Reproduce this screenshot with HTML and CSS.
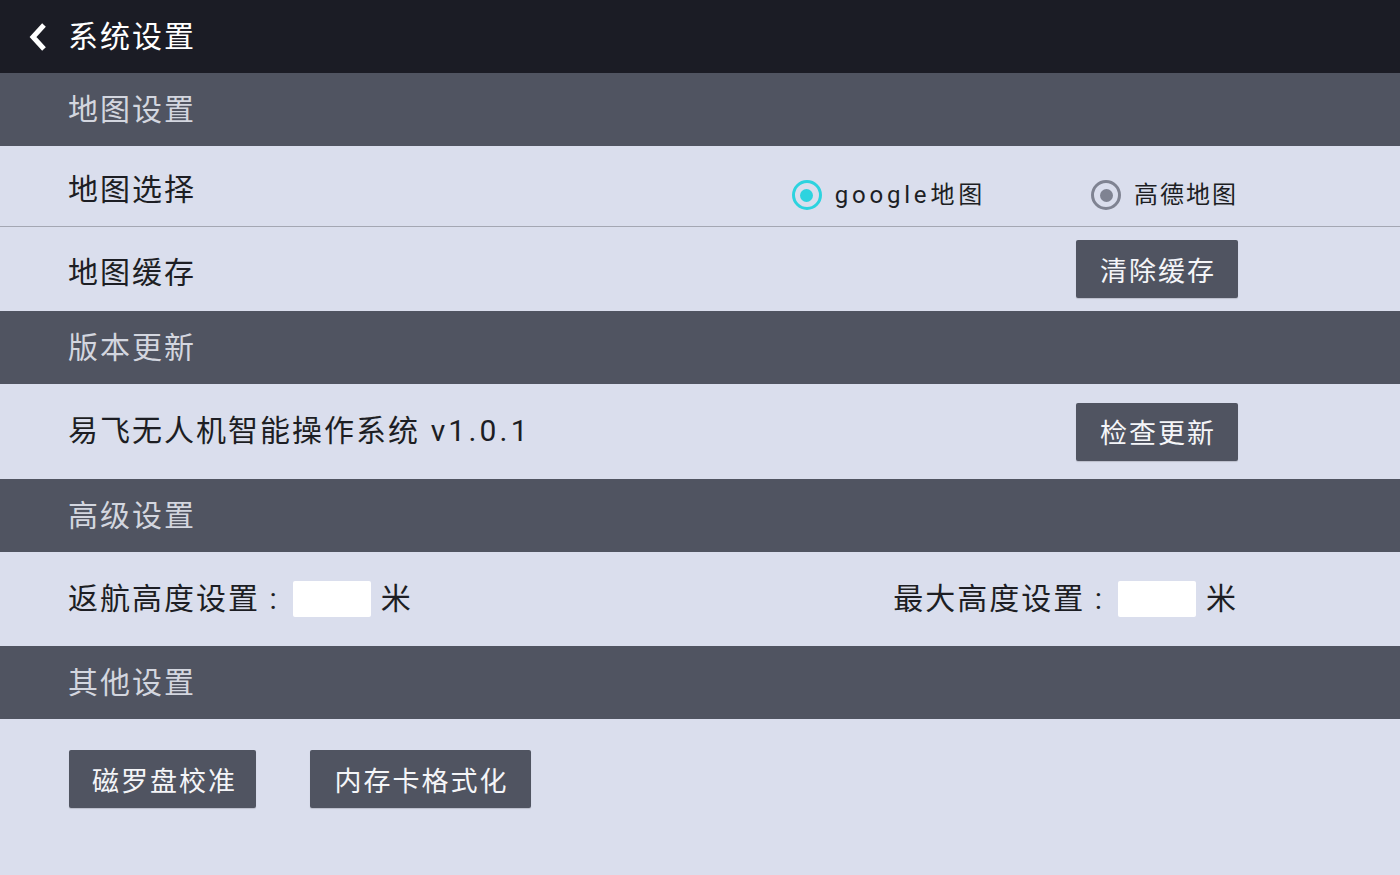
FILE: index.html
```html
<!DOCTYPE html>
<html lang="zh-CN">
<head>
<meta charset="utf-8">
<title>系统设置</title>
<link rel="stylesheet" href="styles.css">
</head>
<body>
<div class="page">
  <header class="topbar">
    <svg class="back" width="22" height="30" viewBox="0 0 22 30"><path d="M17 3 L6 15 L17 27" fill="none" stroke="#ffffff" stroke-width="5" stroke-linejoin="miter"/></svg>
    <span class="title">系统设置</span>
  </header>

  <div class="section">地图设置</div>
  <div class="row row-map bordered">
    <span class="label">地图选择</span>
    <div class="radios">
      <label class="radio on"><span class="dot"></span><span class="rtext">google地图</span></label>
      <label class="radio off"><span class="dot"></span><span class="rtext">高德地图</span></label>
    </div>
  </div>
  <div class="row row-cache">
    <span class="label">地图缓存</span>
    <button class="btn">清除缓存</button>
  </div>

  <div class="section">版本更新</div>
  <div class="row row-tall">
    <span class="label">易飞无人机智能操作系统<span class="ver"> v1.0.1</span></span>
    <button class="btn">检查更新</button>
  </div>

  <div class="section">高级设置</div>
  <div class="row row-tall2">
    <div class="field"><span class="label">返航高度设置 :</span><span class="input"></span><span class="label unit">米</span></div>
    <div class="field"><span class="label">最大高度设置 :</span><span class="input"></span><span class="label unit">米</span></div>
  </div>

  <div class="section">其他设置</div>
  <div class="rest">
    <button class="btn btn-a">磁罗盘校准</button>
    <button class="btn btn-b">内存卡格式化</button>
  </div>
</div>
</body>
</html>
```

FILE: styles.css
```css
* { box-sizing: border-box; }
html, body { margin: 0; padding: 0; }
body {
  background: #dadeed;
  font-family: "Roboto", "Noto Sans CJK SC", "Noto Sans", sans-serif;
}
.page {
  width: 1400px;
  height: 875px;
  display: flex;
  flex-direction: column;
  overflow: hidden;
}
.topbar {
  height: 73px;
  background: #1b1c25;
  display: flex;
  align-items: center;
  padding-left: 27px;
  gap: 19px;
  flex: none;
}
.back { margin-top: 1px; }
.title {
  color: #ffffff;
  font-size: 30px;
  letter-spacing: 2px;
  line-height: 1;
}
.section {
  height: 73px;
  background: #505461;
  color: #d3d6df;
  font-size: 30px;
  letter-spacing: 2px;
  display: flex;
  align-items: center;
  padding-left: 68px;
  padding-bottom: 6px;
  flex: none;
}
.row {
  display: flex;
  align-items: center;
  justify-content: space-between;
  padding: 0 162px 0 68px;
  background: #dadeed;
  flex: none;
}
.bordered { border-bottom: 1px solid #a4a7b3; }
.row-map { height: 81px; }
.row-map > .label { margin-top: 8px; }
.row-cache { height: 84px; }
.row-cache > .label { margin-top: 8px; }
.row-tall { height: 95px; }
.row-tall > .label { margin-bottom: 2px; }
.row-tall2 { height: 94px; }
.row-tall2 .field { margin-bottom: 1px; }
.label {
  color: #1d1e24;
  font-size: 30px;
  letter-spacing: 2px;
  line-height: 1;
}
.ver { letter-spacing: 3.2px; }
.radios {
  display: flex;
  align-items: center;
  gap: 105px;
  margin-top: 18px;
}
.radio {
  display: flex;
  align-items: center;
  gap: 13px;
}
.dot {
  width: 30px;
  height: 30px;
  border-radius: 50%;
  border: 3px solid #2dd3df;
  display: flex;
  align-items: center;
  justify-content: center;
}
.dot::after {
  content: "";
  width: 13px;
  height: 13px;
  border-radius: 50%;
  background: #2dd3df;
}
.radio.off .dot { border-color: #7f8392; }
.radio.off .dot::after { background: #7f8392; }
.rtext {
  color: #1d1e24;
  font-size: 24px;
  letter-spacing: 2px;
  line-height: 1;
}
.radio.on .rtext { letter-spacing: 3.8px; }
.btn {
  background: #505461;
  color: #f4f5f8;
  border: none;
  border-radius: 2px;
  height: 58px;
  padding: 0 22px 0 24px;
  font-family: "Noto Sans CJK SC", "Noto Sans", sans-serif;
  font-size: 27px;
  letter-spacing: 2px;
  box-shadow: 0 1px 1px rgba(0,0,0,0.15);
}
.btn-a { width: 187px; padding: 0 0 0 4px; }
.btn-b { width: 221px; padding: 0 0 0 2px; }
.field {
  display: flex;
  align-items: center;
}
.input {
  width: 78px;
  height: 36px;
  background: #ffffff;
  border-radius: 2px;
  margin: 0 10px 0 14px;
}
.rest {
  flex: 1;
  display: flex;
  align-items: flex-start;
  gap: 54px;
  padding: 31px 0 0 69px;
}
```
